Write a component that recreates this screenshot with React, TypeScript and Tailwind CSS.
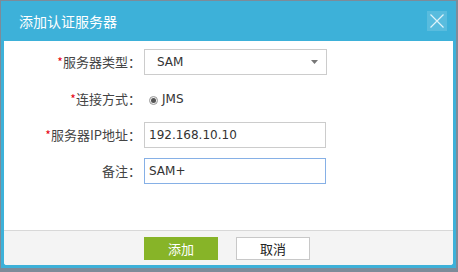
import React from "react";

const cjk = '"Noto Sans CJK SC", "DejaVu Sans", sans-serif';
const lat = '"DejaVu Sans", "Noto Sans CJK SC", sans-serif';

function Label({ text, req }: { text: string; req?: boolean }) {
  return (
    <div className="w-[137px] mr-[3px] shrink-0 text-right text-[13px] text-[#444] leading-[26px]" style={{ fontFamily: cjk }}>
      {req && <span className="text-[#e60012] text-[12px]">*</span>}
      {text}：
    </div>
  );
}

export default function App() {
  return (
    <div className="w-[458px] h-[272px] bg-[#7d8b99] pt-px pl-px overflow-hidden">
      <div className="w-[455px] h-[267px] bg-[#3db1d9] flex flex-col px-[3px] pb-[3px]">
        <div className="h-[40px] shrink-0 flex items-center justify-between pl-[15px] pr-[6px]">
          <span className="text-white text-[14px]" style={{ fontFamily: cjk }}>添加认证服务器</span>
          <div className="w-[20px] h-[20px] bg-white/15 flex items-center justify-center">
            <svg width="16" height="16" viewBox="0 0 16 16">
              <path d="M1.5 1.5 L14.5 14.5 M14.5 1.5 L1.5 14.5" stroke="#dff3fa" strokeWidth="1.2" fill="none" />
            </svg>
          </div>
        </div>
        <div className="flex-1 bg-white rounded-b-[3px] flex flex-col overflow-hidden">
          <div className="flex-1 flex flex-col pt-[8px]">
            <div className="flex items-center h-[26px]">
              <Label text="服务器类型" req />
              <div className="w-[183px] h-[26px] border border-[#cccccc] flex items-center justify-between pl-[12px] pr-[8px]">
                <span className="text-[12px] text-[#333]" style={{ fontFamily: lat }}>SAM</span>
                <svg width="7" height="4" viewBox="0 0 7 4"><path d="M0 0 H7 L3.5 4 Z" fill="#777" /></svg>
              </div>
            </div>
            <div className="flex items-center h-[26px] mt-[11px]">
              <Label text="连接方式" req />
              <div className="ml-[5px] flex items-center">
                <div className="w-[9px] h-[9px] rounded-full border border-[#9a9a9a] bg-[#f0f0f0] flex items-center justify-center mt-[3px]">
                  <div className="w-[5px] h-[5px] rounded-full bg-[#555]" />
                </div>
                <span className="ml-[4px] text-[12px] text-[#333]" style={{ fontFamily: lat }}>JMS</span>
              </div>
            </div>
            <div className="flex items-center h-[26px] mt-[10px]">
              <Label text="服务器IP地址" req />
              <div className="w-[182px] h-[26px] border border-[#cccccc] flex items-center pl-[4px]">
                <span className="text-[12px] text-[#333]" style={{ fontFamily: lat }}>192.168.10.10</span>
              </div>
            </div>
            <div className="flex items-center h-[26px] mt-[10px]">
              <Label text="备注" />
              <div className="w-[182px] h-[26px] border border-[#86b0e6] flex items-center pl-[4px]">
                <span className="text-[12px] text-[#333]" style={{ fontFamily: lat }}>SAM+</span>
              </div>
            </div>
          </div>
          <div className="h-[35px] shrink-0 border-t border-[#d8d8d8] bg-[#f4f4f4] flex items-start pt-[6px] pl-[140px] gap-[18px]">
            <div className="w-[74px] h-[23px] bg-[#87b428] text-white text-[13px] flex items-center justify-center" style={{ fontFamily: cjk }}>添加</div>
            <div className="w-[74px] h-[23px] bg-white border border-[#c8c8c8] text-[#222] text-[13px] flex items-center justify-center" style={{ fontFamily: cjk }}>取消</div>
          </div>
        </div>
      </div>
    </div>
  );
}
